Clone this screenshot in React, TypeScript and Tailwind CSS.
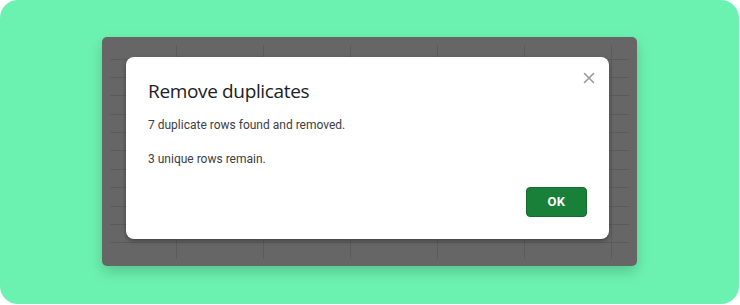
import React from "react";

const rowHeights = [14.5, 18.4, 18.4, 18.4, 18.4, 18.4, 18.4, 18.4, 18.4, 18.4, 18.4, 15.5];
const colWidths = [67, 87, 87, 87, 87, 87, 17];

export default function App() {
  return (
    <div className="w-[740px] h-[305px] bg-white">
      <div className="w-[739px] h-[304px] rounded-[18px] bg-[#6cf2b0] pl-[102px] pt-[37px]">
        <div className="relative w-[535px] h-[229px] rounded-[5px] bg-[#666666] p-[8px] shadow-[0_6px_14px_rgba(0,0,0,0.18)]">
          <div className="flex flex-col w-[519px] h-[214px]">
            {rowHeights.map((h, i) => (
              <div
                key={i}
                className={
                  i < rowHeights.length - 1
                    ? "flex border-b border-[#5b5b5b] box-border"
                    : "flex"
                }
                style={{ height: h }}
              >
                {colWidths.map((w, j) => (
                  <div
                    key={j}
                    className={
                      j < colWidths.length - 1
                        ? "border-r border-[#5b5b5b] box-border h-full"
                        : "h-full"
                    }
                    style={{ width: w }}
                  />
                ))}
              </div>
            ))}
          </div>
          <div className="absolute left-[24px] top-[20px] w-[483px] h-[182px] rounded-[8px] bg-white shadow-[0_2px_4px_rgba(0,0,0,0.35)] font-['Roboto',sans-serif]">
            <div className="absolute right-[14px] top-[15px] w-[12px] h-[12px]">
              <svg viewBox="0 0 12 12" width="12" height="12">
                <path d="M1.5 1.5 L10.5 10.5 M10.5 1.5 L1.5 10.5" stroke="#9a9a9a" strokeWidth="1.6" strokeLinecap="round" />
              </svg>
            </div>
            <div className="flex flex-col pl-[22px] pr-[22px] pt-[22px]">
              <div className="text-[19px] leading-[24px] text-[#202124] font-['Open_Sans',sans-serif] tracking-[-0.35px]">
                Remove duplicates
              </div>
              <div className="mt-[12px] text-[12px] leading-[20px] text-[#3c4043]">
                7 duplicate rows found and removed.
              </div>
              <div className="mt-[14px] text-[12px] leading-[20px] text-[#3c4043]">
                3 unique rows remain.
              </div>
              <div className="flex justify-end mt-[18px]">
                <div className="w-[61px] h-[30px] rounded-[4px] bg-[#188038] border border-[#146c2e] flex items-center justify-center text-white text-[13px] font-bold tracking-[0.3px]">
                  OK
                </div>
              </div>
            </div>
          </div>
        </div>
      </div>
    </div>
  );
}
